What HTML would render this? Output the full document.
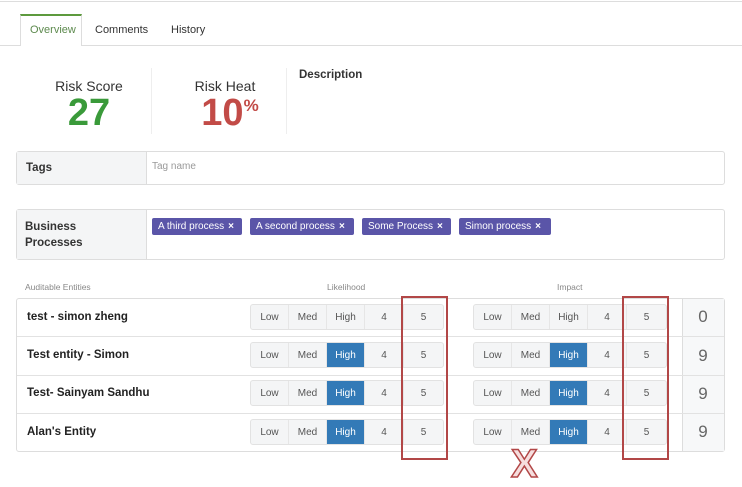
<!DOCTYPE html>
<html><head><style>
*{margin:0;padding:0;box-sizing:border-box}
body{width:742px;height:487px;background:#fff;position:relative;overflow:hidden;font-family:"Liberation Sans",sans-serif;color:#333}
.a{position:absolute}
.tab{position:absolute;top:14px;height:32px;font-size:11px;line-height:32px}
.chip{position:absolute;top:218px;height:17px;background:#5a55a8;color:#fff;font-size:10px;line-height:18px;padding-left:6px;border-radius:2px}
.chip b{margin-left:4px;font-size:10px}
.bg{position:absolute;height:26px;display:flex;border:1px solid #e2e2e2;border-radius:3px;background:#f4f5f6;font-size:10px;color:#555}
.bg div{height:24px;line-height:25px;text-align:center;border-right:1px solid #e6e6e6}
.bg div:last-child{border-right:none}
.bg .on{background:#337ab7;color:#fff}
.ent{position:absolute;left:27px;font-size:11.5px;font-weight:bold;color:#222}
.sc{position:absolute;left:683px;width:40px;text-align:center;font-size:17px;color:#666}
.red{position:absolute;border:2px solid #b24747;top:296px;height:164px}
</style></head><body>
<div class="a" style="left:0;top:1px;width:742px;height:1px;background:#ddd"></div>
<div class="a" style="left:0;top:45px;width:742px;height:1px;background:#ddd"></div>
<div class="a" style="left:20px;top:14px;width:62px;height:32px;background:#fff;border:1px solid #ddd;border-top:2px solid #5d9a3e;border-bottom:none"></div>
<div class="tab" style="left:30px;color:#5d8a4e">Overview</div>
<div class="tab" style="left:95px">Comments</div>
<div class="tab" style="left:171px">History</div>

<div class="a" style="left:39px;top:78px;width:100px;text-align:center;font-size:14px">Risk Score</div>
<div class="a" style="left:39px;top:92px;width:100px;text-align:center;font-size:38px;font-weight:bold;color:#3a9a3a">27</div>
<div class="a" style="left:151px;top:68px;width:1px;height:66px;background:#eee"></div>
<div class="a" style="left:175px;top:78px;width:100px;text-align:center;font-size:14px">Risk Heat</div>
<div class="a" style="left:180px;top:92px;width:100px;text-align:center;font-size:38px;font-weight:bold;color:#c24b47">10<span style="font-size:17px;vertical-align:top;position:relative;top:4px">%</span></div>
<div class="a" style="left:286px;top:68px;width:1px;height:66px;background:#eee"></div>
<div class="a" style="left:299px;top:69px;font-size:11.5px;font-weight:bold">Description</div>

<div class="a" style="left:16px;top:151px;width:709px;height:34px;border:1px solid #ddd;border-radius:3px"></div>
<div class="a" style="left:17px;top:152px;width:130px;height:32px;background:#f4f5f6;border-right:1px solid #ddd"></div>
<div class="a" style="left:26px;top:162px;font-size:11.5px;font-weight:bold">Tags</div>
<div class="a" style="left:152px;top:161px;font-size:10px;color:#999">Tag name</div>

<div class="a" style="left:16px;top:209px;width:709px;height:51px;border:1px solid #ddd;border-radius:3px"></div>
<div class="a" style="left:17px;top:210px;width:130px;height:49px;background:#f4f5f6;border-right:1px solid #ddd"></div>
<div class="a" style="left:25px;top:219px;font-size:11.5px;font-weight:bold;line-height:16px">Business<br>Processes</div>
<div class="chip" style="left:152px;width:90px">A third process<b>×</b></div>
<div class="chip" style="left:250px;width:104px">A second process<b>×</b></div>
<div class="chip" style="left:362px;width:89px">Some Process<b>×</b></div>
<div class="chip" style="left:459px;width:92px">Simon process<b>×</b></div>

<div class="a" style="left:25px;top:282px;font-size:8.5px;color:#888">Auditable Entities</div>
<div class="a" style="left:327px;top:282px;font-size:8.5px;color:#888">Likelihood</div>
<div class="a" style="left:557px;top:282px;font-size:8.5px;color:#888">Impact</div>

<div class="a" style="left:16px;top:298px;width:709px;height:154px;border:1px solid #ddd;border-radius:3px"></div>
<div class="a" style="left:682px;top:298px;width:1px;height:154px;background:#ddd"></div>
<div class="a" style="left:683px;top:299px;width:41px;height:152px;background:#f7f8f9"></div>
<div class="a" style="left:17px;top:336px;width:707px;height:1px;background:#e2e2e2"></div>
<div class="a" style="left:17px;top:375px;width:707px;height:1px;background:#e2e2e2"></div>
<div class="a" style="left:17px;top:413px;width:707px;height:1px;background:#e2e2e2"></div>

<div class="ent" style="top:311px">test - simon zheng</div>
<div class="ent" style="top:349px">Test entity - Simon</div>
<div class="ent" style="top:387px">Test- Sainyam Sandhu</div>
<div class="ent" style="top:426px">Alan's Entity</div>

<div class="bg" style="left:250px;top:304px"><div style="width:38px">Low</div><div style="width:38px">Med</div><div style="width:38px">High</div><div style="width:39px">4</div><div style="width:39px">5</div></div>
<div class="bg" style="left:250px;top:342px"><div style="width:38px">Low</div><div style="width:38px">Med</div><div class="on" style="width:38px">High</div><div style="width:39px">4</div><div style="width:39px">5</div></div>
<div class="bg" style="left:250px;top:380px"><div style="width:38px">Low</div><div style="width:38px">Med</div><div class="on" style="width:38px">High</div><div style="width:39px">4</div><div style="width:39px">5</div></div>
<div class="bg" style="left:250px;top:419px"><div style="width:38px">Low</div><div style="width:38px">Med</div><div class="on" style="width:38px">High</div><div style="width:39px">4</div><div style="width:39px">5</div></div>

<div class="bg" style="left:473px;top:304px"><div style="width:38px">Low</div><div style="width:38px">Med</div><div style="width:38px">High</div><div style="width:39px">4</div><div style="width:39px">5</div></div>
<div class="bg" style="left:473px;top:342px"><div style="width:38px">Low</div><div style="width:38px">Med</div><div class="on" style="width:38px">High</div><div style="width:39px">4</div><div style="width:39px">5</div></div>
<div class="bg" style="left:473px;top:380px"><div style="width:38px">Low</div><div style="width:38px">Med</div><div class="on" style="width:38px">High</div><div style="width:39px">4</div><div style="width:39px">5</div></div>
<div class="bg" style="left:473px;top:419px"><div style="width:38px">Low</div><div style="width:38px">Med</div><div class="on" style="width:38px">High</div><div style="width:39px">4</div><div style="width:39px">5</div></div>

<div class="sc" style="top:307px">0</div>
<div class="sc" style="top:346px">9</div>
<div class="sc" style="top:384px">9</div>
<div class="sc" style="top:422px">9</div>

<div class="red" style="left:401px;width:47px"></div>
<div class="red" style="left:622px;width:47px"></div>
<div class="a" style="left:511px;top:442px;font-size:40px;font-weight:bold;color:#f6dede;-webkit-text-stroke:1.5px #b24747;line-height:44px">X</div>
</body></html>
